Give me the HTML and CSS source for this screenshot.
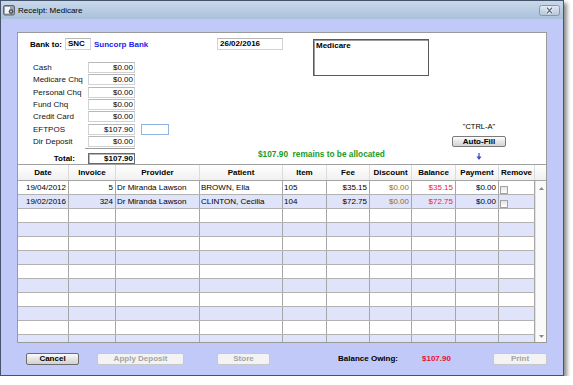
FILE: index.html
```html
<!DOCTYPE html>
<html>
<head>
<meta charset="utf-8">
<link rel="stylesheet" href="styles.css">
</head>
<body>
<div class="window">
  <div class="titlebar">
    <svg class="appicon" width="12" height="12" viewBox="0 0 12 12">
      <rect x="0.5" y="1.5" width="11" height="9.5" rx="1.5" fill="#9aa2ac" stroke="#5e6670"/>
      <rect x="2" y="3" width="5" height="6.5" fill="#f4f4f4"/>
      <circle cx="8" cy="7.5" r="2.3" fill="#4a5058"/>
      <circle cx="8" cy="7.5" r="0.9" fill="#c8ccd2"/>
    </svg>
    <span class="title">Receipt: Medicare</span>
    <span class="closebtn">
      <svg width="21" height="11" viewBox="0 0 21 11">
        <defs>
          <linearGradient id="cg" x1="0" y1="0" x2="0" y2="1">
            <stop offset="0" stop-color="#e2eaf4"/>
            <stop offset="1" stop-color="#b4c4d8"/>
          </linearGradient>
        </defs>
        <rect x="0.5" y="0.5" width="20" height="10" rx="2" fill="url(#cg)" stroke="#8496b0"/>
        <path d="M8 2.8 L13 8.2 M13 2.8 L8 8.2" stroke="#ffffff" stroke-width="2.8"/>
        <path d="M8 2.8 L13 8.2 M13 2.8 L8 8.2" stroke="#5c6a7c" stroke-width="1.3"/>
      </svg>
    </span>
  </div>
  <div class="client">
    <div class="panel">
      <div class="form">
        <div class="left">
          <div class="bankrow">
            <span class="banklbl">Bank to:</span>
            <span class="field code">SNC</span>
            <span class="bankname">Suncorp Bank</span>
            <span class="field date">26/02/2016</span>
          </div>
          <div class="payments">
            <div class="prow"><span class="plabel">Cash</span><span class="field amt">$0.00</span></div>
            <div class="prow"><span class="plabel">Medicare Chq</span><span class="field amt">$0.00</span></div>
            <div class="prow"><span class="plabel">Personal Chq</span><span class="field amt">$0.00</span></div>
            <div class="prow"><span class="plabel">Fund Chq</span><span class="field amt">$0.00</span></div>
            <div class="prow"><span class="plabel">Credit Card</span><span class="field amt">$0.00</span></div>
            <div class="prow"><span class="plabel">EFTPOS</span><span class="field amt">$107.90</span><span class="field focus"></span></div>
            <div class="prow"><span class="plabel">Dir Deposit</span><span class="field amt">$0.00</span></div>
          </div>
          <div class="sep"></div>
          <div class="totalrow"><span class="tlabel">Total:</span><span class="field amt totalbox">$107.90</span></div>
        </div>
        <div class="medicare">Medicare</div>
        <div class="remains">$107.90&nbsp; remains to be allocated</div>
        <div class="autofill">
          <span class="ctrl">"CTRL-A"</span>
          <span class="afbtn">Auto-Fill</span>
          <svg class="arrow" width="6" height="7" viewBox="0 0 6 7">
            <path d="M3 0 V4" stroke="#3a48b8" stroke-width="1.2"/>
            <path d="M0.5 3.5 H5.5 L3 7 Z" fill="#3a48b8"/>
          </svg>
        </div>
      </div>
      <div class="grid">
        <div class="thead">
          <span class="th">Date</span>
          <span class="th">Invoice</span>
          <span class="th">Provider</span>
          <span class="th">Patient</span>
          <span class="th">Item</span>
          <span class="th">Fee</span>
          <span class="th">Discount</span>
          <span class="th">Balance</span>
          <span class="th">Payment</span>
          <span class="th">Remove</span>
          <span class="th blank"></span>
        </div>
        <div class="tbody">
          <div class="rows">
            <div class="tr">
              <span class="td r">19/04/2012</span>
              <span class="td r">5</span>
              <span class="td">Dr Miranda Lawson</span>
              <span class="td">BROWN, Ella</span>
              <span class="td">105</span>
              <span class="td r">$35.15</span>
              <span class="td r disc">$0.00</span>
              <span class="td r bal">$35.15</span>
              <span class="td r">$0.00</span>
              <span class="td"><span class="chk"></span></span>
            </div>
            <div class="tr">
              <span class="td r">19/02/2016</span>
              <span class="td r">324</span>
              <span class="td">Dr Miranda Lawson</span>
              <span class="td">CLINTON, Cecilia</span>
              <span class="td">104</span>
              <span class="td r">$72.75</span>
              <span class="td r disc">$0.00</span>
              <span class="td r bal">$72.75</span>
              <span class="td r">$0.00</span>
              <span class="td"><span class="chk"></span></span>
            </div>
            <div class="tr"><span class="td"></span><span class="td"></span><span class="td"></span><span class="td"></span><span class="td"></span><span class="td"></span><span class="td"></span><span class="td"></span><span class="td"></span><span class="td"></span></div>
            <div class="tr"><span class="td"></span><span class="td"></span><span class="td"></span><span class="td"></span><span class="td"></span><span class="td"></span><span class="td"></span><span class="td"></span><span class="td"></span><span class="td"></span></div>
            <div class="tr"><span class="td"></span><span class="td"></span><span class="td"></span><span class="td"></span><span class="td"></span><span class="td"></span><span class="td"></span><span class="td"></span><span class="td"></span><span class="td"></span></div>
            <div class="tr"><span class="td"></span><span class="td"></span><span class="td"></span><span class="td"></span><span class="td"></span><span class="td"></span><span class="td"></span><span class="td"></span><span class="td"></span><span class="td"></span></div>
            <div class="tr"><span class="td"></span><span class="td"></span><span class="td"></span><span class="td"></span><span class="td"></span><span class="td"></span><span class="td"></span><span class="td"></span><span class="td"></span><span class="td"></span></div>
            <div class="tr"><span class="td"></span><span class="td"></span><span class="td"></span><span class="td"></span><span class="td"></span><span class="td"></span><span class="td"></span><span class="td"></span><span class="td"></span><span class="td"></span></div>
            <div class="tr"><span class="td"></span><span class="td"></span><span class="td"></span><span class="td"></span><span class="td"></span><span class="td"></span><span class="td"></span><span class="td"></span><span class="td"></span><span class="td"></span></div>
            <div class="tr"><span class="td"></span><span class="td"></span><span class="td"></span><span class="td"></span><span class="td"></span><span class="td"></span><span class="td"></span><span class="td"></span><span class="td"></span><span class="td"></span></div>
            <div class="tr"><span class="td"></span><span class="td"></span><span class="td"></span><span class="td"></span><span class="td"></span><span class="td"></span><span class="td"></span><span class="td"></span><span class="td"></span><span class="td"></span></div>
            <div class="tr"><span class="td"></span><span class="td"></span><span class="td"></span><span class="td"></span><span class="td"></span><span class="td"></span><span class="td"></span><span class="td"></span><span class="td"></span><span class="td"></span></div>
          </div>
          <div class="scroll">
            <svg width="5" height="3" viewBox="0 0 5 3"><path d="M0 3 L2.5 0 L5 3 Z" fill="#8a8a8a"/></svg>
            <svg width="5" height="3" viewBox="0 0 5 3"><path d="M0 0 L2.5 3 L5 0 Z" fill="#8a8a8a"/></svg>
          </div>
        </div>
      </div>
    </div>
    <div class="footer">
      <span class="btn cancel">Cancel</span>
      <span class="btn dis apply">Apply Deposit</span>
      <span class="btn dis store">Store</span>
      <span class="owinglbl">Balance Owing:</span>
      <span class="owingval">$107.90</span>
      <span class="btn dis print">Print</span>
    </div>
  </div>
</div>
</body>
</html>
```
FILE: styles.css
```css
html, body {
  margin: 0;
  padding: 0;
  background: #ffffff;
}
body {
  font-family: "Liberation Sans", Arial, sans-serif;
  font-size: 8px;
  color: #000;
}
.window {
  width: 564px;
  height: 376px;
  box-sizing: border-box;
  border: 1px solid #44546a;
  background: #c1c9f9;
  box-shadow: 3px 3px 4px rgba(0, 0, 0, 0.45);
  display: flex;
  flex-direction: column;
}
.titlebar {
  height: 18px;
  flex: none;
  display: flex;
  align-items: center;
  background: linear-gradient(#c9d8ea, #aac1db);
}
.appicon {
  margin-left: 2px;
  flex: none;
}
.title {
  margin-left: 3px;
  font-size: 8px;
  color: #000;
}
.closebtn {
  margin-left: auto;
  margin-right: 3px;
  display: flex;
}
.client {
  flex: 1;
  padding: 13px 16px 0 16px;
  display: flex;
  flex-direction: column;
}
.panel {
  height: 311px;
  flex: none;
  box-sizing: border-box;
  border: 1px solid #9a9a9a;
  background: #ffffff;
  display: flex;
  flex-direction: column;
}
.form {
  height: 131px;
  flex: none;
  display: grid;
  grid-template-columns: 295px 116px 1fr;
  grid-template-rows: 43px 1fr;
}
.left {
  grid-column: 1;
  grid-row: 1 / 3;
  padding: 5px 0 0 12px;
}
.bankrow {
  display: flex;
  align-items: center;
  height: 12px;
}
.banklbl {
  width: 35px;
  font-weight: bold;
}
.field {
  box-sizing: border-box;
  border: 1px solid #d2d2d2;
  border-top-color: #b8b8b8;
  background: #fff;
  height: 11px;
  line-height: 9px;
  padding: 0 2px;
  white-space: nowrap;
}
.code {
  width: 26px;
  height: 12px;
  line-height: 10px;
  font-weight: bold;
}
.bankname {
  margin-left: 3px;
  width: 123px;
  color: #1c1cee;
  font-weight: bold;
}
.date {
  width: 66px;
  height: 12px;
  line-height: 10px;
  font-weight: bold;
}
.payments {
  margin-top: 12px;
  padding-left: 3px;
  display: flex;
  flex-direction: column;
  gap: 1.33px;
}
.prow {
  display: flex;
  align-items: center;
}
.plabel {
  width: 55px;
  color: #111;
}
.amt {
  width: 47px;
  text-align: right;
  padding-right: 1px;
}
.focus {
  width: 28px;
  margin-left: 6px;
  border-color: #90b4e2;
}
.sep {
  margin: 1px 0 0 55px;
  width: 50px;
  height: 1px;
  background: #9c9c9c;
}
.totalrow {
  margin-top: 4px;
  display: flex;
  align-items: center;
}
.tlabel {
  width: 58px;
  box-sizing: border-box;
  padding-right: 13px;
  text-align: right;
  font-weight: bold;
}
.totalbox {
  height: 11px;
  border: 1px solid #6a6a6a;
  box-shadow: inset 1px 1px 0 #b8b8b8;
  font-weight: bold;
}
.medicare {
  grid-column: 2;
  grid-row: 1;
  margin-top: 6px;
  height: 37px;
  box-sizing: border-box;
  border: 1px solid #5a5a5a;
  box-shadow: inset 1px 1px 0 #9c9c9c;
  font-weight: bold;
  padding: 1px 2px;
  line-height: 9px;
}
.remains {
  grid-column: 1 / 3;
  grid-row: 2;
  align-self: end;
  margin: 0 0 5px 240px;
  color: #1e9a1e;
  font-weight: bold;
  white-space: nowrap;
  font-size: 8.3px;
}
.autofill {
  grid-column: 3;
  grid-row: 1 / 3;
  margin-left: 23px;
  width: 54px;
  display: flex;
  flex-direction: column;
  align-items: center;
  justify-content: flex-end;
  padding-bottom: 4px;
}
.ctrl {
  line-height: 10px;
  font-size: 7.5px;
}
.afbtn {
  margin-top: 4px;
  width: 54px;
  height: 11px;
  box-sizing: border-box;
  border: 1px solid #7a7a7a;
  border-radius: 2px;
  background: linear-gradient(#fdfdfd, #e6e6e6 50%, #d4d4d4);
  font-weight: bold;
  text-align: center;
  line-height: 9px;
}
.arrow {
  margin-top: 6px;
  display: block;
}
.grid {
  flex: 1;
  border-top: 1px solid #a0a0a0;
  display: flex;
  flex-direction: column;
  overflow: hidden;
}
.thead {
  display: grid;
  grid-template-columns: 51px 47px 84px 83px 44px 43px 42px 44px 43px 36px 1fr;
  height: 16px;
  flex: none;
  box-sizing: border-box;
  border-bottom: 1px solid #a4a4a4;
  background: linear-gradient(#ffffff, #f0f0f0);
}
.th {
  border-right: 1px solid #dcdcdc;
  font-weight: bold;
  text-align: center;
  line-height: 15px;
  white-space: nowrap;
}
.th.blank {
  border-right: none;
}
.tbody {
  flex: 1;
  display: flex;
  overflow: hidden;
}
.rows {
  width: 517px;
  flex: none;
}
.tr {
  display: grid;
  grid-template-columns: 51px 47px 84px 83px 44px 43px 42px 44px 43px 36px;
  height: 14px;
  box-sizing: border-box;
  border-bottom: 1px solid #b2b2b2;
}
.tr:nth-child(even) {
  background: #dfe4fb;
}
.td {
  border-right: 1px solid #a6a6a6;
  padding: 0 1px;
  line-height: 13px;
  white-space: nowrap;
  overflow: hidden;
}
.r {
  text-align: right;
  padding-right: 2px;
}
.disc {
  color: #a06a24;
}
.bal {
  color: #f0203c;
}
.chk {
  display: block;
  width: 8px;
  height: 8px;
  margin-top: 5px;
  box-sizing: border-box;
  border: 1px solid #a2a2a2;
  background: linear-gradient(#e4e4e4, #ffffff);
}
.scroll {
  flex: 1;
  box-sizing: border-box;
  background: #fafafa;
  border-left: 1px solid #e2e2e2;
  display: flex;
  flex-direction: column;
  justify-content: space-between;
  align-items: center;
  padding: 6px 0 4px;
}
.scroll svg {
  display: block;
}
.footer {
  height: 31px;
  flex: none;
  display: flex;
  align-items: center;
  padding-left: 9px;
}
.btn {
  height: 12px;
  box-sizing: border-box;
  border-radius: 2px;
  text-align: center;
  line-height: 10px;
  font-weight: bold;
}
.cancel {
  width: 53px;
  border: 1px solid #6c6c6c;
  background: linear-gradient(#fbfbfb, #e4e4e4 50%, #d2d2d2);
}
.dis {
  border: 1px solid #c8c8c8;
  background: #f3f3f3;
  color: #a4a4a4;
}
.apply {
  width: 87px;
  margin-left: 18px;
}
.store {
  width: 53px;
  margin-left: 33px;
}
.owinglbl {
  margin-left: 68px;
  width: 59px;
  font-weight: bold;
  white-space: nowrap;
}
.owingval {
  margin-left: 25px;
  width: 31px;
  font-weight: bold;
  color: #e8102c;
}
.print {
  width: 54px;
  margin-left: 40px;
}
```
